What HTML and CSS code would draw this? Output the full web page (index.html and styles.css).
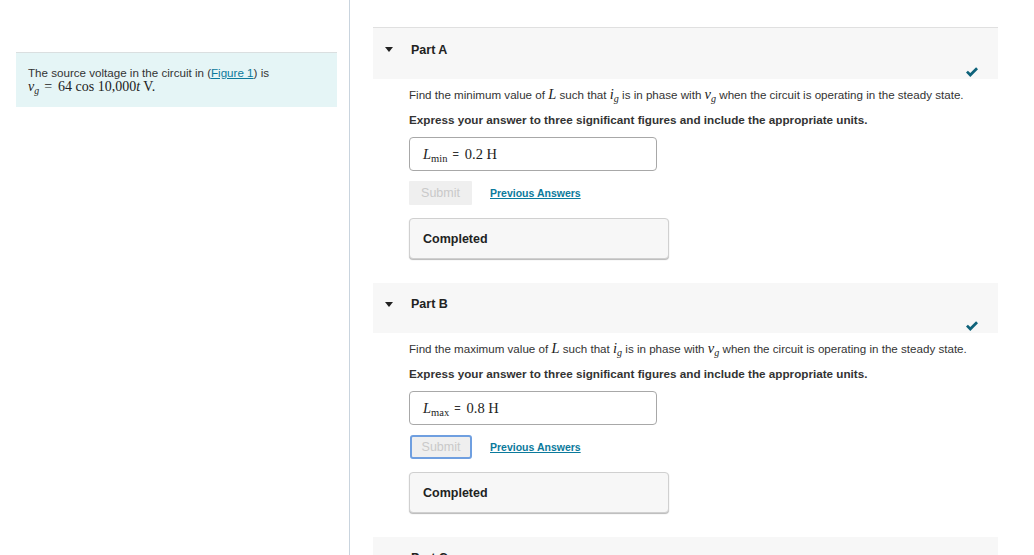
FILE: index.html
```html
<!DOCTYPE html>
<html>
<head>
<meta charset="utf-8">
<link rel="stylesheet" href="styles.css">
</head>
<body>
<div class="page">
  <aside class="left">
    <div class="intro">
      <div>The source voltage in the circuit in (<a class="link" href="#">Figure 1</a>) is</div>
      <div class="math"><i>v<sub>g</sub></i><span class="rel">=</span>64 cos 10,000<i>t</i> V.</div>
    </div>
  </aside>
  <main class="right">
    <section class="part first">
      <div class="part-head">
        <span class="tri"></span>
        <span class="part-title">Part A</span>
        <svg class="check" width="14" height="11" viewBox="0 0 14 11"><path d="M1 5.6 L2.9 3.7 L5.3 6.1 L11.1 0.3 L13 2.2 L5.3 9.9 Z" fill="#0e627a"/></svg>
      </div>
      <div class="part-body">
        <p class="q">Find the minimum value of <i class="m">L</i> such that <i class="m">i<sub>g</sub></i> is in phase with <i class="m">v<sub>g</sub></i> when the circuit is operating in the steady state.</p>
        <p class="instr">Express your answer to three significant figures and include the appropriate units.</p>
        <div class="answer"><span class="m"><i>L</i><sub>min</sub></span><span class="eq">=</span><span class="m val">0.2 H</span></div>
        <div class="actions">
          <span class="submit">Submit</span>
          <a class="prev" href="#">Previous Answers</a>
        </div>
        <div class="done">Completed</div>
      </div>
    </section>
    <section class="part">
      <div class="part-head">
        <span class="tri"></span>
        <span class="part-title">Part B</span>
        <svg class="check" width="14" height="11" viewBox="0 0 14 11"><path d="M1 5.6 L2.9 3.7 L5.3 6.1 L11.1 0.3 L13 2.2 L5.3 9.9 Z" fill="#0e627a"/></svg>
      </div>
      <div class="part-body">
        <p class="q">Find the maximum value of <i class="m">L</i> such that <i class="m">i<sub>g</sub></i> is in phase with <i class="m">v<sub>g</sub></i> when the circuit is operating in the steady state.</p>
        <p class="instr">Express your answer to three significant figures and include the appropriate units.</p>
        <div class="answer"><span class="m"><i>L</i><sub>max</sub></span><span class="eq">=</span><span class="m val">0.8 H</span></div>
        <div class="actions">
          <span class="submit focus">Submit</span>
          <a class="prev" href="#">Previous Answers</a>
        </div>
        <div class="done">Completed</div>
      </div>
    </section>
    <section class="part">
      <div class="part-head">
        <span class="tri"></span>
        <span class="part-title">Part C</span>
      </div>
    </section>
  </main>
</div>
</body>
</html>
```
FILE: styles.css
```css
html, body {
  margin: 0;
  padding: 0;
  background: #fff;
  height: 555px;
  overflow: hidden;
}
body {
  font-family: "Liberation Sans", Arial, sans-serif;
  color: #333;
  font-size: 11.6px;
}
.page {
  display: flex;
  align-items: stretch;
  min-height: 555px;
}
.left {
  flex: none;
  border-right: 1px solid #c9d4de;
  box-sizing: border-box;
  width: 350px;
  padding: 52px 12px 0 16px;
}
.intro {
  background: #e5f5f6;
  border-top: 1px solid #dadfe0;
  padding: 12px 12px 12px 12px;
  height: 55px;
  box-sizing: border-box;
  font-size: 11.6px;
  line-height: 15px;
  color: #333;
}
.intro .math {
  font-family: "Liberation Serif", "Times New Roman", serif;
  font-size: 14px;
  line-height: 14px;
  color: #222;
}
.intro .rel { margin: 0 6px 0 5px; }
.intro sub, .q sub {
  font-size: 70%;
  vertical-align: -3px;
  line-height: 0;
}
.link {
  color: #0b7a9c;
  text-decoration: underline;
}
.right {
  flex: none;
  width: 625px;
  margin-left: 23px;
  padding-top: 27px;
}
.part-head {
  position: relative;
  background: #f7f7f7;
  height: 50px;
  display: flex;
  align-items: center;
  padding-left: 12px;
  padding-bottom: 8px;
  box-sizing: border-box;
}
.part.first .part-head {
  border-top: 1px solid #e0e0e0;
  height: 52px;
  padding-bottom: 8px;
}
.tri {
  width: 0;
  height: 0;
  border-left: 4px solid transparent;
  border-right: 4px solid transparent;
  border-top: 5px solid #222;
  margin-right: 18px;
}
.part-title {
  font-weight: bold;
  font-size: 12.5px;
  color: #222;
}
.check {
  position: absolute;
  right: 19px;
  bottom: 1px;
}
.part-body {
  padding: 8px 0 24px 36px;
}
.q {
  margin: 0;
  height: 16px;
  line-height: 16px;
  font-size: 11.6px;
  color: #333;
  white-space: nowrap;
}
.m {
  font-family: "Liberation Serif", "Times New Roman", serif;
  font-size: 14.5px;
  line-height: 12px;
  color: #222;
}
i.m { font-style: italic; }
.instr {
  margin: 9px 0 0;
  height: 16px;
  line-height: 16px;
  font-weight: bold;
  font-size: 11.7px;
  color: #333;
}
.answer {
  margin-top: 9px;
  width: 248px;
  height: 34px;
  box-sizing: border-box;
  border: 1px solid #a8a8a8;
  border-radius: 4px;
  display: flex;
  align-items: center;
  padding-left: 13px;
}
.answer sub {
  font-style: normal;
  font-size: 10.5px;
  vertical-align: -3px;
  line-height: 0;
}
.answer .eq {
  font-size: 11px;
  margin: 0 6px 0 5px;
  color: #333;
}
.answer .val { font-style: normal; font-size: 14.5px; }
.actions {
  margin-top: 10px;
  display: flex;
  align-items: center;
  gap: 18px;
}
.submit {
  width: 63px;
  height: 24px;
  box-sizing: border-box;
  background: #efefef;
  color: #c9c9c9;
  display: flex;
  align-items: center;
  justify-content: center;
  font-size: 12.5px;
  border-radius: 1px;
}
.submit.focus {
  border: 2px solid #6f9fe0;
  border-radius: 3px;
  width: 62px;
  margin-left: 1px;
}
.prev {
  color: #0b7a9c;
  font-weight: bold;
  font-size: 10.5px;
  text-decoration: underline;
}
.done {
  margin-top: 13px;
  width: 260px;
  height: 41px;
  box-sizing: border-box;
  background: #f7f7f7;
  border: 1px solid #d0d0d0;
  border-radius: 4px;
  box-shadow: 0 1px 1px #b8b8b8;
  display: flex;
  align-items: center;
  padding-left: 13px;
  font-weight: bold;
  font-size: 12.5px;
  color: #222;
}
```
